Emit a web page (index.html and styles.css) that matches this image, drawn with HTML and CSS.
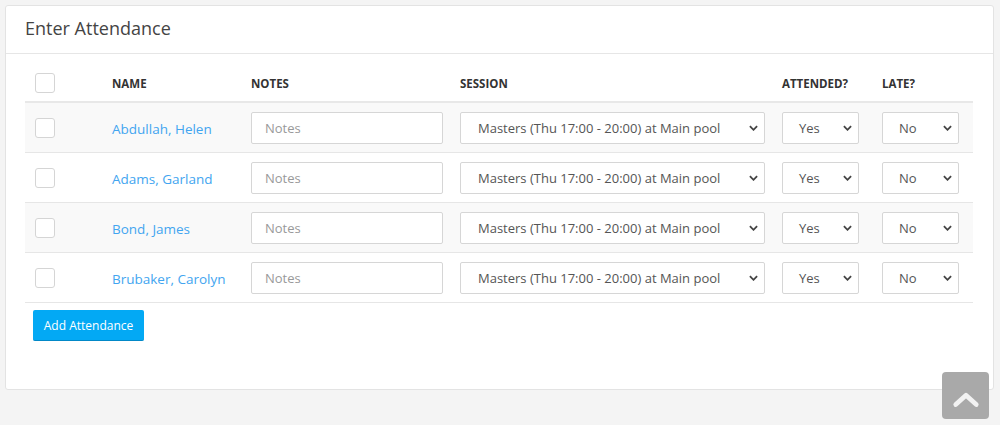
FILE: index.html
```html
<!DOCTYPE html>
<html>
<head>
<meta charset="utf-8">
<link rel="stylesheet" href="styles.css">
</head>
<body>
<div class="card">
  <div class="card-header">Enter Attendance</div>
  <div class="card-body">
    <table class="att">
      <colgroup>
        <col class="c-chk"><col class="c-name"><col class="c-notes"><col class="c-sess"><col class="c-att"><col class="c-late">
      </colgroup>
      <thead>
        <tr>
          <th><span class="cb"></span></th>
          <th>NAME</th>
          <th>NOTES</th>
          <th>SESSION</th>
          <th>ATTENDED?</th>
          <th>LATE?</th>
        </tr>
      </thead>
      <tbody>
        <tr class="odd">
          <td><span class="cb"></span></td>
          <td><a class="name">Abdullah, Helen</a></td>
          <td><div class="inp">Notes</div></td>
          <td><div class="sel sess">Masters (Thu 17:00 - 20:00) at Main pool<svg viewBox="0 0 10 6"><path d="M1 1l4 4 4-4"/></svg></div></td>
          <td><div class="sel small">Yes<svg viewBox="0 0 10 6"><path d="M1 1l4 4 4-4"/></svg></div></td>
          <td><div class="sel small">No<svg viewBox="0 0 10 6"><path d="M1 1l4 4 4-4"/></svg></div></td>
        </tr>
        <tr>
          <td><span class="cb"></span></td>
          <td><a class="name">Adams, Garland</a></td>
          <td><div class="inp">Notes</div></td>
          <td><div class="sel sess">Masters (Thu 17:00 - 20:00) at Main pool<svg viewBox="0 0 10 6"><path d="M1 1l4 4 4-4"/></svg></div></td>
          <td><div class="sel small">Yes<svg viewBox="0 0 10 6"><path d="M1 1l4 4 4-4"/></svg></div></td>
          <td><div class="sel small">No<svg viewBox="0 0 10 6"><path d="M1 1l4 4 4-4"/></svg></div></td>
        </tr>
        <tr class="odd">
          <td><span class="cb"></span></td>
          <td><a class="name">Bond, James</a></td>
          <td><div class="inp">Notes</div></td>
          <td><div class="sel sess">Masters (Thu 17:00 - 20:00) at Main pool<svg viewBox="0 0 10 6"><path d="M1 1l4 4 4-4"/></svg></div></td>
          <td><div class="sel small">Yes<svg viewBox="0 0 10 6"><path d="M1 1l4 4 4-4"/></svg></div></td>
          <td><div class="sel small">No<svg viewBox="0 0 10 6"><path d="M1 1l4 4 4-4"/></svg></div></td>
        </tr>
        <tr>
          <td><span class="cb"></span></td>
          <td><a class="name">Brubaker, Carolyn</a></td>
          <td><div class="inp">Notes</div></td>
          <td><div class="sel sess">Masters (Thu 17:00 - 20:00) at Main pool<svg viewBox="0 0 10 6"><path d="M1 1l4 4 4-4"/></svg></div></td>
          <td><div class="sel small">Yes<svg viewBox="0 0 10 6"><path d="M1 1l4 4 4-4"/></svg></div></td>
          <td><div class="sel small">No<svg viewBox="0 0 10 6"><path d="M1 1l4 4 4-4"/></svg></div></td>
        </tr>
      </tbody>
    </table>
    <button class="btn">Add Attendance</button>
  </div>
</div>
<div class="totop"><svg viewBox="0 0 30 20"><path d="M4 16L15 6l11 10"/></svg></div>
</body>
</html>
```
FILE: styles.css
```css
html, body { margin: 0; padding: 0; }
body {
  background: #f4f4f4;
  font-family: "Open Sans", "Liberation Sans", sans-serif;
  color: #333;
  padding: 5px 6px 0 5px;
  height: 425px;
  box-sizing: border-box;
  overflow: hidden;
  position: relative;
}
.card {
  background: #fff;
  border: 1px solid #e3e3e3;
  border-radius: 3px;
  box-sizing: border-box;
  width: 989px;
  height: 385px;
}
.card-header {
  height: 48px;
  box-sizing: border-box;
  padding: 10px 19px 0;
  font-size: 18px;
  color: #444;
  border-bottom: 1px solid #e6e6e6;
}
.card-body {
  padding: 9px 20px 0 19px;
}
.att {
  border-collapse: collapse;
  table-layout: fixed;
  width: 948px;
}
.c-chk { width: 77px; }
.c-name { width: 139px; }
.c-notes { width: 209px; }
.c-sess { width: 322px; }
.c-att { width: 100px; }
.c-late { width: 101px; }
th {
  text-align: left;
  font-size: 11.5px;
  font-weight: 700;
  color: #333;
  padding: 10px 10px 8px;
  height: 20px;
  border-bottom: 2px solid #e8e8e8;
}
td {
  padding: 9px 10px 8px;
  height: 32px;
  border-bottom: 1px solid #e6e6e6;
  vertical-align: middle;
}
tr.odd td { background: #f9f9f9; }
.cb {
  display: block;
  width: 20px;
  height: 20px;
  box-sizing: border-box;
  border: 1px solid #d5d5d5;
  border-radius: 3px;
  background: #fff;
}
.name {
  color: #42a5f0;
  font-size: 13.5px;
  text-decoration: none;
}
.inp, .sel {
  box-sizing: border-box;
  height: 32px;
  border: 1px solid #d6d6d6;
  border-radius: 2px;
  background: #fff;
  font-size: 13px;
  display: flex;
  align-items: center;
  padding-left: 13px;
}
.inp { width: 192px; color: #999; }
.sel { color: #555; justify-content: space-between; padding-right: 6px; }
.sess { width: 305px; padding-left: 17px; }
.small { width: 77px; padding-left: 16px; }
.sel svg { width: 9px; height: 6px; }
.sel svg path { fill: none; stroke: #444; stroke-width: 2; }
.btn {
  display: block;
  margin-top: 7px;
  margin-left: 8px;
  background: #03a9f4;
  border: none;
  border-bottom: 1px solid #0288c7;
  border-radius: 2px;
  color: #fff;
  font-family: "Open Sans", "Liberation Sans", sans-serif;
  font-size: 12px;
  width: 111px;
  height: 31px;
  padding: 0;
}
.totop {
  position: absolute;
  left: 942px;
  top: 372px;
  width: 47px;
  height: 47px;
  background: #a9a9a9;
  border-radius: 4px;
  display: flex;
  align-items: center;
  justify-content: center;
}
.totop svg { width: 28px; height: 20px; margin-top: 6px; }
.totop svg path { fill: none; stroke: #f2f2f2; stroke-width: 5; stroke-linecap: round; stroke-linejoin: round; }
```
